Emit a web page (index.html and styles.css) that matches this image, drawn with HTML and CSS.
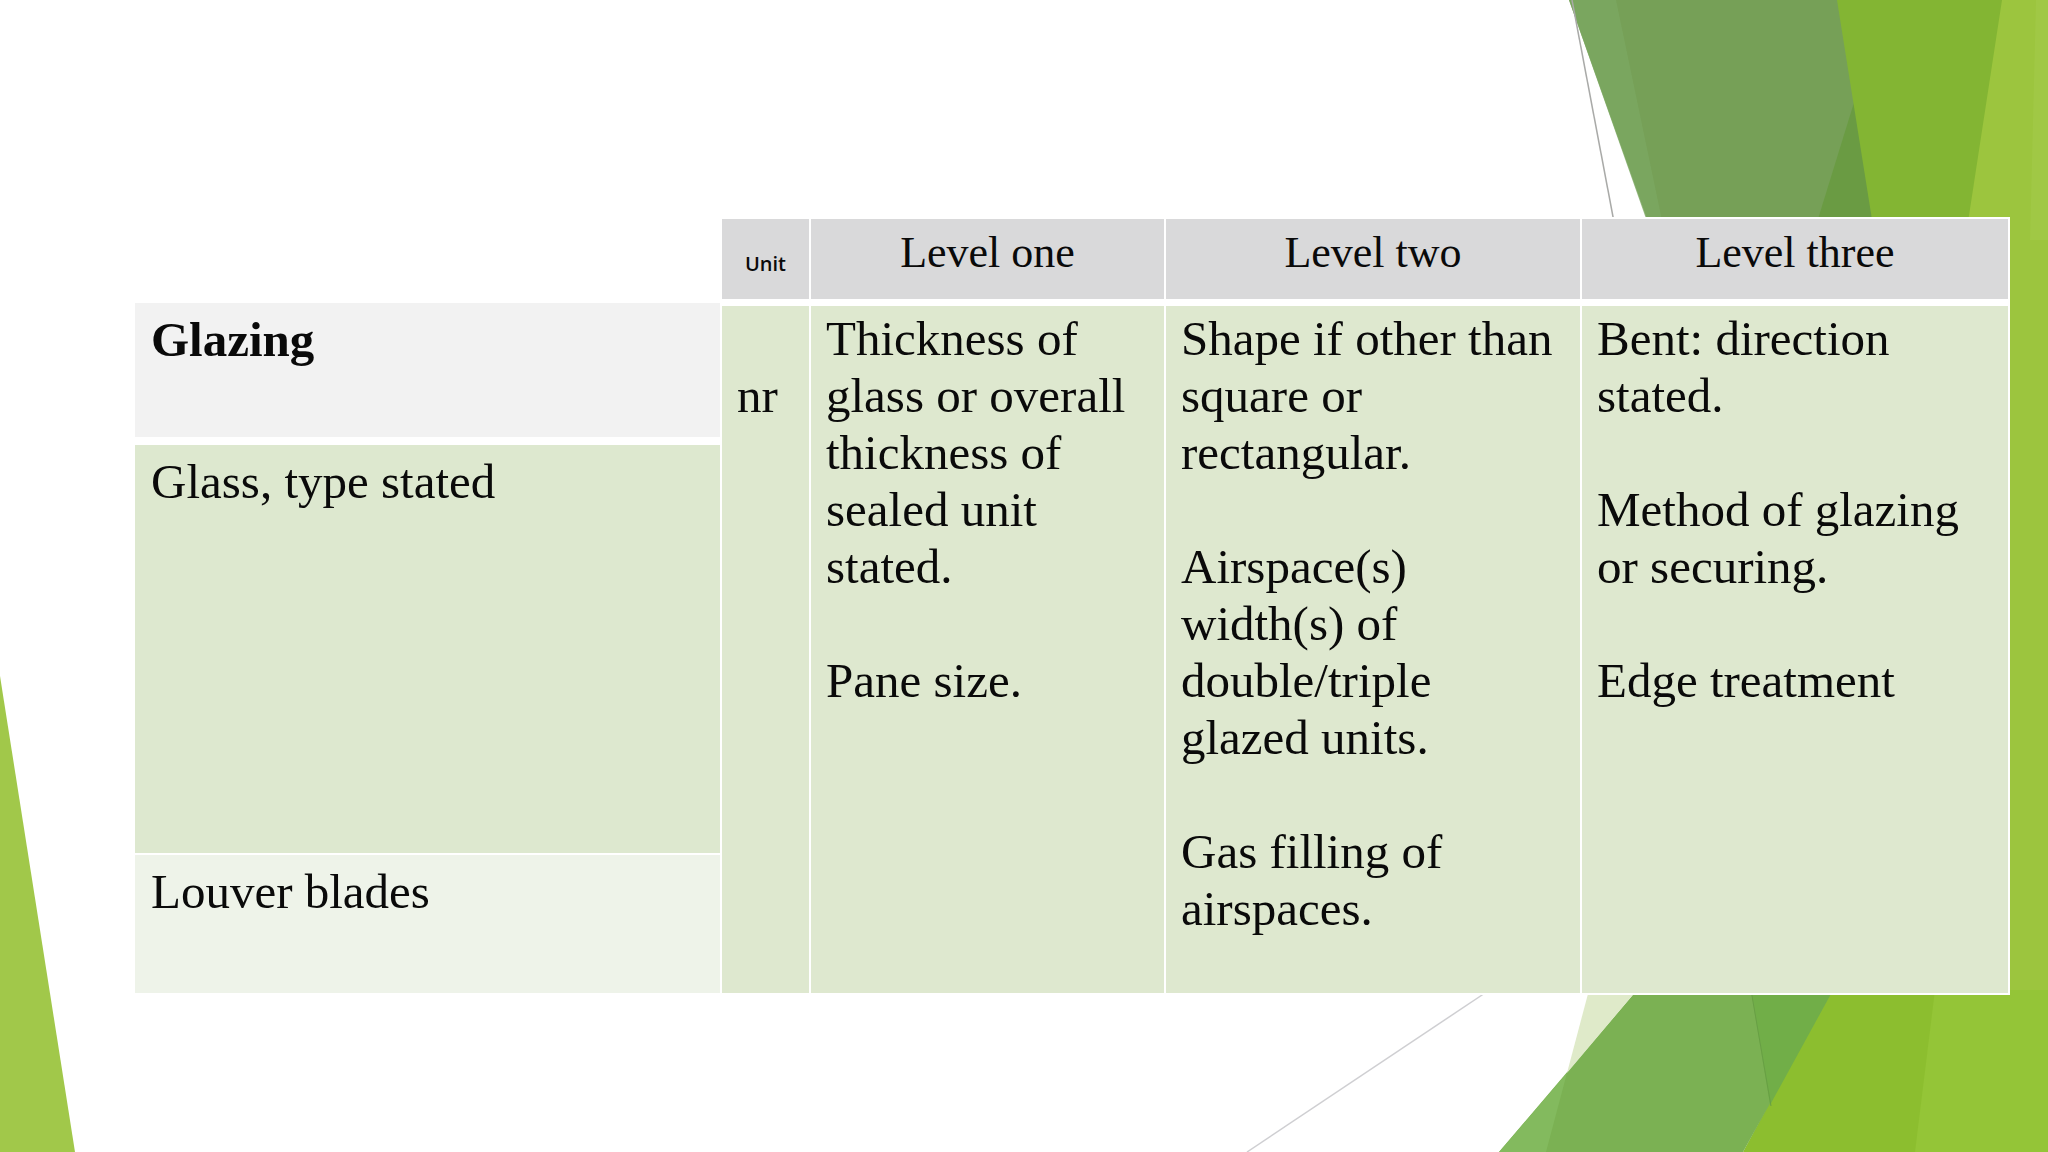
FILE: index.html
```html
<!DOCTYPE html>
<html lang="en">
<head>
<meta charset="utf-8">
<title>Glazing</title>
<link rel="stylesheet" href="styles.css">
</head>
<body>
<div class="slide">
  <svg class="decor" viewBox="0 0 2048 1152" width="2048" height="1152" aria-hidden="true">
    <polygon points="1569,0 1840,0 1890,320 1683,320" fill="#76a057"/>
    <polygon points="1569,0 1616,0 1664,230 1650,230" fill="#7ca862" opacity="0.8"/>
    <polygon points="1856,96 1876,232 1814,232" fill="#6a9b43"/>
    <polygon points="1837,0 2006,0 1957,320 1888,320" fill="#83b533"/>
    <polygon points="2002,0 2048,0 2048,1000 2000,1000 2000,320 1953,320" fill="#9cc53e"/>
    <polygon points="2036,0 2048,0 2048,240 2030,240" fill="#a0c845"/>
    <line x1="1572" y1="0" x2="1614" y2="222" stroke="#a9aaa8" stroke-width="1.5"/>
    <polygon points="1830,990 2048,990 2048,1152 1743,1152" fill="#8cbe2f"/>
    <polygon points="1935,990 2048,990 2048,1152 1915,1152" fill="#94c537"/>
    <polygon points="1637,990 1833,990 1743,1152 1499,1152" fill="#7bb153"/>
    <polygon points="1751,990 1833,990 1770,1105" fill="#71ae48"/>
    <line x1="1751" y1="990" x2="1771" y2="1106" stroke="#689f45" stroke-width="1"/>
    <polygon points="1589,990 1637,990 1567,1073" fill="#dfeac9"/>
    <polygon points="1567,1073 1546,1152 1499,1152" fill="#83ba5e"/>
    <line x1="1500" y1="983" x2="1247" y2="1152" stroke="#cfcfd2" stroke-width="1.5"/>
    <polygon points="0,676 75,1152 0,1152" fill="#a1c84a"/>
  </svg>

  <div class="layout">
    <div class="rowheads">
      <div class="rh rh-group"><span class="bold">Glazing</span></div>
      <div class="rh rh-glass">Glass, type stated</div>
      <div class="rh rh-louver">Louver blades</div>
    </div>

    <div class="grid">
      <div class="hcell hcell-unit">Unit</div>
      <div class="hcell">Level one</div>
      <div class="hcell">Level two</div>
      <div class="hcell">Level three</div>

      <div class="bcell bcell-unit"><p class="blank">&nbsp;</p><p>nr</p></div>
      <div class="bcell">
        <p>Thickness of glass or overall thickness of sealed unit stated.</p>
        <p class="blank">&nbsp;</p>
        <p>Pane size.</p>
      </div>
      <div class="bcell">
        <p>Shape if other than square or rectangular.</p>
        <p class="blank">&nbsp;</p>
        <p>Airspace(s) width(s) of double/triple glazed units.</p>
        <p class="blank">&nbsp;</p>
        <p>Gas filling of airspaces.</p>
      </div>
      <div class="bcell bcell-l3">
        <p>Bent: direction stated.</p>
        <p class="blank">&nbsp;</p>
        <p>Method of glazing or securing.</p>
        <p class="blank">&nbsp;</p>
        <p>Edge treatment</p>
      </div>
    </div>
  </div>
</div>
</body>
</html>
```

FILE: styles.css
```css
* { box-sizing: border-box; }

html, body {
  margin: 0;
  padding: 0;
  background: #ffffff;
}

.slide {
  position: relative;
  width: 2048px;
  height: 1152px;
  overflow: hidden;
  background: #ffffff;
  font-family: "Liberation Serif", "Times New Roman", serif;
  color: #0a0a0a;
}

.decor {
  position: absolute;
  left: 0;
  top: 0;
  z-index: 0;
}

.layout {
  position: relative;
  z-index: 1;
  display: flex;
  align-items: flex-start;
  padding-top: 217px;
  padding-left: 135px;
}

.rowheads {
  width: 585px;
  margin-top: 86px;
  display: flex;
  flex-direction: column;
}

.rh {
  font-size: 49px;
  line-height: 57px;
  padding: 8px 16px 0 16px;
}

.rh-group {
  height: 134px;
  background: #f2f2f2;
  margin-bottom: 8px;
}

.rh-glass {
  height: 408px;
  background: #dde8cf;
  margin-bottom: 2px;
}

.rh-louver {
  height: 138px;
  background: #eef3e9;
}

.bold { font-weight: bold; }

.grid {
  display: grid;
  grid-template-columns: 87px 353px 414px 426px;
  grid-template-rows: 80px 687px;
  column-gap: 2px;
  row-gap: 7px;
  padding: 2px;
  background: #ffffff;
}

.hcell {
  background: #d9d9da;
  text-align: center;
  font-size: 44px;
  line-height: 56px;
  padding-top: 6px;
}

.hcell-unit {
  font-family: "Open Sans", "Liberation Sans", sans-serif;
  font-weight: 600;
  font-size: 20px;
  line-height: 28px;
  padding-top: 31px;
}

.bcell {
  background: #dee8cf;
  font-size: 49px;
  line-height: 57px;
  padding: 4px 18px 0 15px;
}

.bcell-l3 {
  padding-right: 24px;
}

.bcell-unit {
  padding-left: 15px;
  padding-right: 0;
}

.bcell p {
  margin: 0;
}
```
